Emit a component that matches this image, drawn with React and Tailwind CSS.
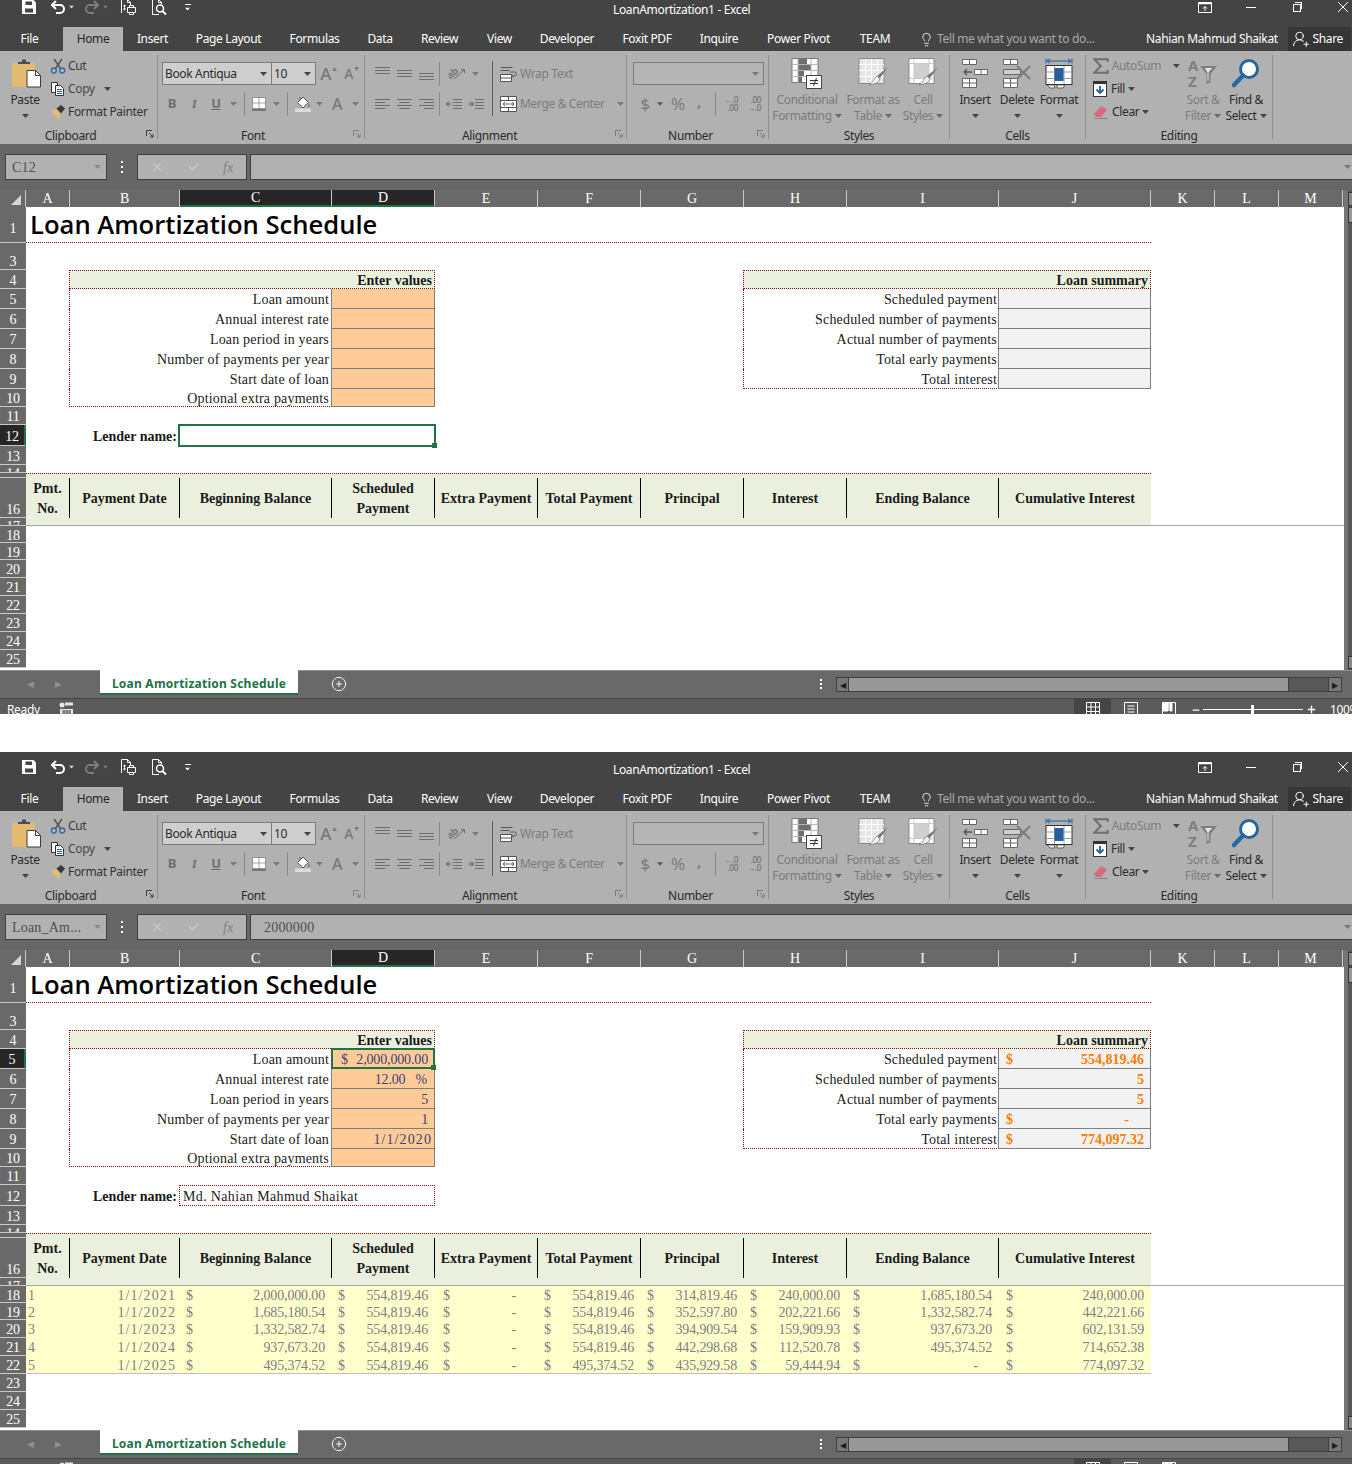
import React from "react";
import { Lightbulb, UserRoundPlus, CirclePlus, Check, Minus, Plus, X } from "lucide-react";

const COLS =
  "grid grid-cols-[26px_44px_110px_152px_103px_103px_103px_103px_103px_152px_152px_64px_64px_64px_1px]";
const INNER = "grid grid-cols-[44px_110px_152px_103px_103px_103px_103px_103px_152px_152px]";
const FONT_SERIF = "[font-family:'Liberation_Serif',serif]";
const DOT = "border-dotted border-[#8a0f0f]";
const OFF = "text-[#7c7c7c]";
const ON = "text-[#2b2b2b]";

const TABS = [
  ["File", "w-[59px] text-white"],
  ["Home", "w-[60px] ml-[4px] bg-[#b1b1b1] text-[#262626]"],
  ["Insert", "w-[59px] text-white"],
  ["Page Layout", "w-[93px] text-white"],
  ["Formulas", "w-[79px] text-white"],
  ["Data", "w-[52px] text-white"],
  ["Review", "w-[67px] text-white"],
  ["View", "w-[53px] text-white"],
  ["Developer", "w-[82px] text-white"],
  ["Foxit PDF", "w-[78px] text-white"],
  ["Inquire", "w-[66px] text-white"],
  ["Power Pivot", "w-[93px] text-white"],
  ["TEAM", "w-[60px] text-white"],
];

const LETTERS = [
  ["A", "col-start-2"],
  ["B", "col-start-3"],
  ["C", "col-start-4"],
  ["D", "col-start-5"],
  ["E", "col-start-6"],
  ["F", "col-start-7"],
  ["G", "col-start-8"],
  ["H", "col-start-9"],
  ["I", "col-start-10"],
  ["J", "col-start-11"],
  ["K", "col-start-12"],
  ["L", "col-start-13"],
  ["M", "col-start-14"],
];

const INPUT_LABELS = [
  "Loan amount",
  "Annual interest rate",
  "Loan period in years",
  "Number of payments per year",
  "Start date of loan",
  "Optional extra payments",
];
const SUMMARY_LABELS = [
  "Scheduled payment",
  "Scheduled number of payments",
  "Actual number of payments",
  "Total early payments",
  "Total interest",
];

const SCHEDULE = [
  ["1", "1/1/2021", "2,000,000.00", "554,819.46", "-", "554,819.46", "314,819.46", "240,000.00", "1,685,180.54", "240,000.00"],
  ["2", "1/1/2022", "1,685,180.54", "554,819.46", "-", "554,819.46", "352,597.80", "202,221.66", "1,332,582.74", "442,221.66"],
  ["3", "1/1/2023", "1,332,582.74", "554,819.46", "-", "554,819.46", "394,909.54", "159,909.93", "937,673.20", "602,131.59"],
  ["4", "1/1/2024", "937,673.20", "554,819.46", "-", "554,819.46", "442,298.68", "112,520.78", "495,374.52", "714,652.38"],
  ["5", "1/1/2025", "495,374.52", "554,819.46", "-", "495,374.52", "435,929.58", "59,444.94", "-", "774,097.32"],
];
const SCHEDULE_ROWS = [
  ["18", "h-[17px]"],
  ["19", "h-[17px]"],
  ["20", "h-[18px]"],
  ["21", "h-[18px]"],
  ["22", "h-[18px]"],
];

const Caret = ({ c = "#555", className = "" }) => (
  <svg width="7" height="4" viewBox="0 0 7 4" className={className}>
    <path d="M0 0h7L3.5 4z" fill={c} />
  </svg>
);

// quick access toolbar
const SaveIcon = () => (
  <svg width="16" height="16" viewBox="0 0 16 16">
    <path fillRule="evenodd" d="M1 1h11.5L15 3.5V15H1zM4.500 2.500V6h6.500V2.500zM4 9.500v4h8v-4z" fill="#fff" />
  </svg>
);
const UndoIcon = ({ c = "#fff", flip = false }) => (
  <svg width="16" height="14" viewBox="0 0 16 14" className={flip ? "-scale-x-100" : ""}>
    <path d="M6 1L2 5l4 4M2 5h8a3.600 3.600 0 0 1 0 8H6" fill="none" stroke={c} strokeWidth="2" />
  </svg>
);
const PrintIcon = () => (
  <svg width="17" height="18" viewBox="0 0 17 18" fill="none" stroke="#fff">
    <path d="M1.500 15V1.500h6l3 3V8" />
    <path d="M7.500 1.500v3h3" />
    <path d="M7.500 9.500h8v5h-8zM9.500 9.500V7.500h4v2M9.500 14.500v2h4v-2" />
    <path d="M3 8h3M3 11h3M4.500 6.500v6" strokeWidth="0.8" />
  </svg>
);
const PreviewIcon = () => (
  <svg width="17" height="18" viewBox="0 0 17 18" fill="none" stroke="#fff">
    <path d="M8 16.500H1.500v-15h6l3 3v2M7.500 1.500v3h3" />
    <circle cx="9" cy="10.500" r="3.500" strokeWidth="1.500" />
    <path d="M11.500 13l3.500 3.500" strokeWidth="2" />
  </svg>
);
const RibbonDisplayIcon = () => (
  <svg width="14" height="11" viewBox="0 0 14 11" fill="none" stroke="#fff">
    <path d="M.500.500h13v10h-13z" />
    <path d="M0 1.500h14" strokeWidth="1.500" />
    <path d="M7 9V4.500M5 6.500l2-2 2 2" />
  </svg>
);
const CloseIcon = () => (
  <svg width="10" height="10" viewBox="0 0 10 10" stroke="#fff">
    <path d="M0 0l10 10M10 0L0 10" />
  </svg>
);

// clipboard
const PasteIcon = () => (
  <svg width="30" height="32" viewBox="0 0 30 32">
    <rect x="0" y="5" width="23" height="24" rx="1.500" fill="#e3bb70" />
    <path d="M6 6V4h4V1.500h4V4h4v2z" fill="#4c4c4c" />
    <path d="M15 12.500h8.500l5 5V29H15z" fill="#fff" stroke="#3c3c3c" />
    <path d="M23.500 12.500v5h5" fill="none" stroke="#3c3c3c" />
  </svg>
);
const CutIcon = () => (
  <svg width="16" height="16" viewBox="0 0 16 16" fill="none">
    <path d="M4 1l6.500 9.500M12 1L5.500 10.500" stroke="#555" strokeWidth="1.500" />
    <circle cx="3.800" cy="12.500" r="2.500" stroke="#2b6cb0" strokeWidth="1.300" />
    <circle cx="12.200" cy="12.500" r="2.500" stroke="#2b6cb0" strokeWidth="1.300" />
  </svg>
);
const CopyIcon = () => (
  <svg width="16" height="16" viewBox="0 0 16 16" fill="#fff" stroke="#333">
    <path d="M1.500 1.500h6v10h-6z" />
    <path d="M5.500 4.500h5l3 3v7h-8z" />
    <path d="M7 8.500h5M7 10.500h5M7 12.500h5" stroke="#1f5f9e" />
  </svg>
);
const PainterIcon = () => (
  <svg width="16" height="15" viewBox="0 0 16 15">
    <path d="M1 7l5-2 5 5-3 5z" fill="#e3bb70" />
    <path d="M6.500 4.500L11 1l4 3.500-4 5z" fill="#3a3a3a" />
  </svg>
);

// font
const BordersIcon = () => (
  <svg width="14" height="14" viewBox="0 0 14 14">
    <rect x="0.500" y="0.500" width="13" height="11" fill="#fff" />
    <path d="M0.500 0.500h13v11h-13zM7 0.500v11M0.500 6h13" fill="none" stroke="#555" strokeDasharray="1 1" />
    <path d="M0 13h14" stroke="#666" strokeWidth="1.500" />
  </svg>
);
const FillIcon = () => (
  <svg width="16" height="16" viewBox="0 0 16 16">
    <path d="M8 1l5.500 5.500L8 12 2.500 6.500z" fill="#fff" stroke="#555" />
    <path d="M5 3.500V1" stroke="#555" />
    <path d="M14 8c1 1.500 1 3 0 3s-1-1.500 0-3z" fill="#666" />
    <rect x="0" y="12.500" width="16" height="3.500" fill="#dcdcdc" />
  </svg>
);

// alignment
const Lines = ({ d }) => (
  <svg width="15" height="15" viewBox="0 0 15 15">
    <path d={d} stroke="#6e6e6e" strokeWidth="1" fill="none" />
  </svg>
);
const OrientIcon = () => (
  <svg width="20" height="15" viewBox="0 0 20 15">
    <text x="1" y="11" fontSize="10" fontWeight="700" fill="#7a7a7a" transform="rotate(-38 6 8)" fontFamily="Noto Sans">
      ab
    </text>
    <path d="M8 13L18 4M15 3.500h3.500V7" stroke="#6e6e6e" fill="none" />
  </svg>
);
const IndentIcon = ({ out = false }) => (
  <svg width="16" height="13" viewBox="0 0 16 13" fill="none" stroke="#6e6e6e">
    <path d="M7 1.500h9M7 4.500h9M7 7.500h9M7 10.500h9" />
    <path d={out ? "M5.500 6H.5M3 3.500L.5 6 3 8.500" : "M.5 6h5M3 3.500L5.500 6 3 8.500"} stroke="#555" />
  </svg>
);
const WrapIcon = () => (
  <svg width="17" height="16" viewBox="0 0 17 16" fill="none" stroke="#555">
    <path d="M.500 1.500h12M.500 4.500h9" />
    <path d="M.500 8.500h11v7h-11zM.500 12h11" fill="#fff" />
    <path d="M10 6h4.500a1.800 1.800 0 0 1 0 4H12M13.500 8.500L12 10l1.500 1.500" stroke="#666" />
  </svg>
);
const MergeIcon = () => (
  <svg width="17" height="16" viewBox="0 0 17 16" fill="#fff" stroke="#555">
    <path d="M.500.500h16v15H.500z" />
    <path d="M.500 4.500h16M.500 11.500h16M8.500.500v4M8.500 11.500v4" />
    <path d="M3 8h11M5 6l-2 2 2 2M12 6l2 2-2 2" fill="none" strokeWidth="0.900" />
  </svg>
);

// styles
const CondIcon = () => (
  <svg width="32" height="32" viewBox="0 0 32 32">
    <rect x="1" y="0.500" width="26" height="24" fill="#fff" stroke="#777" />
    <path d="M7 1h9v5H7zM7 7h13v5H7zM7 13h6v5H7zM7 19h4v5H7z" fill="#6f6f6f" />
    <path d="M1 6.500h26M1 12.500h26M1 18.500h26M7 1v24M20 1v24" stroke="#b5b5b5" />
    <rect x="15.500" y="17.500" width="15" height="13" fill="#fff" stroke="#444" />
    <path d="M19 22.500h8M19 25.500h8M25.500 20l-3 8" stroke="#333" fill="none" />
  </svg>
);
const TableIcon = () => (
  <svg width="32" height="32" viewBox="0 0 32 32">
    <rect x="2" y="0.500" width="25" height="25" fill="#e6e6e6" stroke="#8a8a8a" />
    <path d="M2 6.500h25M2 12.500h25M2 18.500h25M8.500 1v24M14.500 1v24M20.500 1v24" stroke="#fff" />
    <path d="M31 9L23 20l-3-2z" fill="#767676" />
    <path d="M20 18l3 3c-1 3-4 5-11 6 4-2 5-7 8-9z" fill="#f3f3f3" stroke="#6f6f6f" strokeWidth="0.700" />
  </svg>
);
const CellStyleIcon = () => (
  <svg width="32" height="32" viewBox="0 0 32 32">
    <rect x="2" y="0.500" width="25" height="25" fill="#fff" stroke="#8a8a8a" />
    <rect x="7" y="5.500" width="15" height="15" fill="#cfcfcf" />
    <path d="M2 5.500h25M2 20.500h25M7 1v24M22 1v24" stroke="#c8c8c8" />
    <path d="M31 9L23 20l-3-2z" fill="#767676" />
    <path d="M20 18l3 3c-1 3-4 5-11 6 4-2 5-7 8-9z" fill="#f3f3f3" stroke="#6f6f6f" strokeWidth="0.700" />
  </svg>
);

// cells
const InsertIcon = () => (
  <svg width="28" height="30" viewBox="0 0 28 30" fill="#fff" stroke="#666">
    <path d="M1.500 1.500h14v5h-14zM8.500 1.500v5" />
    <path d="M13.500 11.500h13v5h-13zM20 11.500v5" />
    <path d="M1.500 20.500h14v9h-14zM1.500 25h14M8.500 20.500v9" />
    <path d="M11 14H3M6 11l-3 3 3 3" fill="none" stroke="#555" strokeWidth="1.300" />
  </svg>
);
const DeleteIcon = () => (
  <svg width="30" height="30" viewBox="0 0 30 30" fill="#fff" stroke="#666">
    <path d="M1.500 1.500h14v5h-14zM8.500 1.500v5" />
    <path d="M1.500 11.500h17v5h-17z" fill="#d0d0d0" />
    <path d="M1.500 20.500h14v9h-14zM1.500 25h14M8.500 20.500v9" />
    <path d="M15 8l13 13M28 8L15 21" stroke="#7a7a7a" strokeWidth="1.800" fill="none" />
  </svg>
);
const FormatIcon = () => (
  <svg width="28" height="32" viewBox="0 0 28 32" fill="none">
    <path d="M1 .500v5M27 .500v5M2 3h24M5 1L2 3l3 2M23 1l3 2-3 2" stroke="#1f5f9e" />
    <rect x="1" y="7.500" width="26" height="19" fill="#fff" stroke="#333" />
    <path d="M1 14h26M1 20.500h26M9.500 8v18M19 8v18" stroke="#999" />
    <rect x="9.500" y="10" width="9" height="13" fill="#265f9e" />
    <path d="M2 27h7l1 3H5zM12 27h8l-2 3h-6z" fill="#f3f3f3" stroke="#444" strokeWidth="0.800" />
  </svg>
);

// editing
const SigmaIcon = () => (
  <svg width="16" height="16" viewBox="0 0 16 16">
    <path d="M15 4V1.200H1.500L8 8l-6.500 6.800H15V12" fill="none" stroke="#6e6e6e" strokeWidth="2" />
  </svg>
);
const FillDownIcon = () => (
  <svg width="14" height="16" viewBox="0 0 14 16">
    <rect x="0.500" y="0.500" width="13" height="15" fill="#fff" stroke="#333" />
    <rect x="0" y="0" width="14" height="3" fill="#333" />
    <path d="M7 5v7M3.500 8.500L7 12l3.500-3.500" fill="none" stroke="#1f5f9e" strokeWidth="1.800" />
  </svg>
);
const EraserIcon = () => (
  <svg width="16" height="14" viewBox="0 0 16 14">
    <path d="M1 9l7-8 6 3.500-6 7.500H3z" fill="#d9697f" />
    <path d="M1 13.500h14" stroke="#888" />
  </svg>
);
const SortIcon = () => (
  <svg width="32" height="30" viewBox="0 0 32 30">
    <text x="1" y="13" fontSize="15" fontWeight="700" fill="#7f7f7f" fontFamily="Noto Sans">A</text>
    <text x="1" y="29" fontSize="15" fontWeight="700" fill="#7f7f7f" fontFamily="Noto Sans">Z</text>
    <path d="M13 8h17l-6.500 8v8l-4 2V16z" fill="#7f7f7f" />
    <path d="M18 10h7l-3.500 4.500v8l-1 .5v-8.500z" fill="#e6e6e6" />
  </svg>
);
const FindIcon = () => (
  <svg width="28" height="30" viewBox="0 0 28 30" fill="none">
    <circle cx="17" cy="11" r="8.500" fill="#fff" stroke="#25689f" strokeWidth="3" />
    <path d="M11 17.500L2 27" stroke="#25689f" strokeWidth="4.500" strokeLinecap="round" />
  </svg>
);
const Launcher = ({ c = "#555" }) => (
  <svg width="8" height="8" viewBox="0 0 8 8" fill="none" stroke={c}>
    <path d="M.500 6V.500H6" />
    <path d="M3 3l4 4M7 4v3H4" />
  </svg>
);

const Group = ({ w, label, launcher, children }) => (
  <div className={`${w} relative h-[84px] border-r border-[#8f8f8f] shrink-0`}>
    <div className="h-[73px] flex">{children}</div>
    <div className="h-[11px] text-center leading-[15px] text-[#2b2b2b]">{label}</div>
    {launcher && (
      <div className="absolute right-[3px] bottom-[1px]">
        <Launcher c={launcher} />
      </div>
    )}
  </div>
);

const BigBtn = ({ w, icon, l1, l2, caret, c = OFF, caretColor = "#6a6a6a" }) => (
  <div className={`${w} flex flex-col items-center shrink-0 pt-[3px] leading-[16px] ${c}`}>
    <div className="h-[32px] flex items-start">{icon}</div>
    <div className="mt-[2px] whitespace-nowrap">{l1}</div>
    <div className="flex items-center gap-[3px] whitespace-nowrap h-[16px]">
      {l2}
      {caret && <Caret c={caretColor} />}
    </div>
  </div>
);

const Slot = ({ w, children, className = "" }) => (
  <div className={`${w} flex items-center justify-center shrink-0 ${className}`}>{children}</div>
);
const VSep = ({ w }) => (
  <div className={`${w} h-[24px] flex justify-center shrink-0`}>
    <div className="w-px h-full bg-[#8a8a8a]" />
  </div>
);

const Ribbon = () => (
  <div className="h-[93px] bg-[#b1b1b1] flex pt-[4px] text-[12px]">
    <Group w="w-[158px]" label={<span className="pr-[16px]">Clipboard</span>} launcher="#3a3a3a">
      <div className={`w-[50px] flex flex-col items-center pt-[3px] leading-[16px] ${ON}`}>
        <div className="h-[32px] ml-[4px]">
          <PasteIcon />
        </div>
        <div className="mt-[2px]">Paste</div>
        <Caret c="#444" className="mt-[6px]" />
      </div>
      <div className="-mt-[1px]">
        <div className="h-[23px] flex items-center gap-[2px] text-[#3a3a3a]">
          <CutIcon />
          Cut
        </div>
        <div className="h-[23px] flex items-center gap-[2px] text-[#4a4a4a]">
          <CopyIcon />
          Copy
          <Caret c="#444" className="ml-[7px]" />
        </div>
        <div className="h-[23px] flex items-center gap-[2px] text-[#333] whitespace-nowrap">
          <PainterIcon />
          Format Painter
        </div>
      </div>
    </Group>

    <Group w="w-[207px]" label={<span className="pr-[16px]">Font</span>} launcher="#7a7a7a">
      <div className="pl-[3px] pt-[7px] w-full">
        <div className="flex h-[23px] items-center">
          <div className="ml-[1px] w-[110px] h-full border border-[#7c7c7c] bg-[#cecece] flex items-center pl-[2px] pr-[4px] justify-between text-[#2b2b2b]">
            Book Antiqua
            <Caret c="#444" />
          </div>
          <div className="w-[44px] h-full border border-l-0 border-[#7c7c7c] bg-[#cecece] flex items-center pl-[2px] pr-[4px] justify-between text-[#2b2b2b]">
            10
            <Caret c="#444" />
          </div>
          <Slot w="w-[24px] ml-[1px]">
            <span className="text-[17px] text-[#777] font-medium">A</span>
            <span className="text-[7px] text-[#777] -mt-[8px]">▲</span>
          </Slot>
          <Slot w="w-[22px]">
            <span className="text-[14px] text-[#777] font-medium">A</span>
            <span className="text-[7px] text-[#777] -mt-[8px]">▼</span>
          </Slot>
        </div>
        <div className="flex h-[24px] mt-[7px] items-center text-[#6f6f6f] text-[13px]">
          <Slot w="w-[22px]"><b>B</b></Slot>
          <Slot w="w-[22px]"><i className={`font-bold ${FONT_SERIF}`}>I</i></Slot>
          <Slot w="w-[22px]"><b className="underline">U</b></Slot>
          <Slot w="w-[12px]"><Caret c="#7a7a7a" /></Slot>
          <VSep w="w-[10px]" />
          <Slot w="w-[20px]"><BordersIcon /></Slot>
          <Slot w="w-[14px]"><Caret c="#7a7a7a" /></Slot>
          <VSep w="w-[8px]" />
          <Slot w="w-[24px]"><FillIcon /></Slot>
          <Slot w="w-[8px]"><Caret c="#7a7a7a" /></Slot>
          <Slot w="w-[28px]"><span className="text-[16px] font-medium text-[#777]">A</span></Slot>
          <Slot w="w-[8px]"><Caret c="#7a7a7a" /></Slot>
        </div>
      </div>
    </Group>

    <Group w="w-[262px]" label={<span className="pr-[12px]">Alignment</span>} launcher="#7a7a7a">
      <div className="pl-[6px] pt-[7px] w-[127px]">
        <div className="flex h-[23px] items-center">
          <Slot w="w-[22px]"><Lines d="M0 1.500h15M0 4.500h15M0 7.500h15" /></Slot>
          <Slot w="w-[22px]"><Lines d="M0 4.500h15M0 7.500h15M0 10.500h15" /></Slot>
          <Slot w="w-[22px]"><Lines d="M0 7.500h15M0 10.500h15M0 13.500h15" /></Slot>
          <VSep w="w-[4px]" />
          <Slot w="w-[30px]"><OrientIcon /></Slot>
          <Slot w="w-[8px]"><Caret c="#7a7a7a" /></Slot>
        </div>
        <div className="flex h-[24px] mt-[7px] items-center">
          <Slot w="w-[22px]"><Lines d="M0 2.500h15M0 5.500h10M0 8.500h15M0 11.500h10" /></Slot>
          <Slot w="w-[22px]"><Lines d="M0 2.500h15M2.500 5.500h10M0 8.500h15M2.500 11.500h10" /></Slot>
          <Slot w="w-[22px]"><Lines d="M0 2.500h15M5 5.500h10M0 8.500h15M5 11.500h10" /></Slot>
          <VSep w="w-[4px]" />
          <Slot w="w-[25px]"><IndentIcon out /></Slot>
          <Slot w="w-[20px]"><IndentIcon /></Slot>
        </div>
      </div>
      <div className="w-px h-[55px] mt-[6px] bg-[#5c5c5c]" />
      <div className={`pl-[7px] pt-[7px] ${OFF}`}>
        <div className="flex h-[23px] items-center gap-[3px] whitespace-nowrap">
          <WrapIcon />
          Wrap Text
        </div>
        <div className="flex h-[24px] mt-[7px] items-center gap-[3px] whitespace-nowrap">
          <MergeIcon />
          Merge &amp; Center
          <Caret c="#7a7a7a" className="ml-[9px]" />
        </div>
      </div>
    </Group>

    <Group w="w-[142px]" label={<span className="pr-[14px]">Number</span>} launcher="#7a7a7a">
      <div className="pl-[6px] pt-[7px]">
        <div className="w-[131px] h-[23px] border border-[#7c7c7c] bg-[#b5b5b5] flex items-center justify-end pr-[4px]">
          <Caret c="#7a7a7a" />
        </div>
        <div className={`flex h-[24px] mt-[7px] items-center ${OFF}`}>
          <Slot w="w-[24px]"><span className="text-[17px]">$</span></Slot>
          <Slot w="w-[6px]"><Caret c="#555" /></Slot>
          <Slot w="w-[30px]"><span className="text-[17px]">%</span></Slot>
          <Slot w="w-[12px]"><span className="text-[15px] font-bold -mt-[6px]">,</span></Slot>
          <div className="w-[17px] h-full flex shrink-0">
            <div className="ml-[10px] w-px h-full bg-[#8a8a8a]" />
          </div>
          <div className="w-[16px] text-[8px] leading-[8px] text-right shrink-0 text-[#6a6a6a]">
            ←.0<br />.00
          </div>
          <div className="w-[16px] ml-[7px] text-[8px] leading-[8px] text-right shrink-0 text-[#6a6a6a]">
            .00<br />→.0
          </div>
        </div>
      </div>
    </Group>

    <Group w="w-[181px]" label="Styles">
      <BigBtn w="w-[76px]" icon={<CondIcon />} l1="Conditional" l2="Formatting" caret />
      <BigBtn w="w-[56px]" icon={<TableIcon />} l1="Format as" l2="Table" caret />
      <BigBtn w="w-[44px]" icon={<CellStyleIcon />} l1="Cell" l2="Styles" caret />
    </Group>

    <Group w="w-[136px]" label="Cells">
      <BigBtn w="w-[50px]" icon={<InsertIcon />} l1="Insert" caret c={ON} caretColor="#444" />
      <BigBtn w="w-[34px]" icon={<DeleteIcon />} l1="Delete" caret c={ON} caretColor="#444" />
      <BigBtn w="w-[50px]" icon={<FormatIcon />} l1="Format" caret c={ON} caretColor="#444" />
    </Group>

    <Group w="w-[187px]" label="Editing">
      <div className="w-[94px] shrink-0 pl-[7px] -mt-[1px]">
        <div className={`h-[23px] flex items-center gap-[3px] ${OFF}`}>
          <SigmaIcon />
          AutoSum
          <Caret c="#444" className="ml-[9px]" />
        </div>
        <div className={`h-[23px] flex items-center gap-[4px] ${ON}`}>
          <FillDownIcon />
          Fill
          <Caret c="#444" className="-ml-[1px]" />
        </div>
        <div className={`h-[23px] flex items-center gap-[3px] ${ON}`}>
          <EraserIcon />
          Clear
          <Caret c="#444" />
        </div>
      </div>
      <BigBtn w="w-[46px]" icon={<SortIcon />} l1="Sort &" l2="Filter" caret />
      <BigBtn w="w-[40px]" icon={<FindIcon />} l1="Find &" l2="Select" caret c={ON} caretColor="#444" />
    </Group>
  </div>
);

const TitleBar = () => (
  <div className="h-[35px] bg-[#444444] flex items-start text-white text-[12px]">
    <div className="w-[613px] flex items-center h-[30px] pl-[21px] shrink-0">
      <SaveIcon />
      <div className="ml-[13px]"><UndoIcon /></div>
      <Caret c="#ddd" className="ml-[2px] scale-75" />
      <div className="ml-[9px]"><UndoIcon c="#7d7d7d" flip /></div>
      <Caret c="#7d7d7d" className="ml-[2px] scale-75" />
      <div className="ml-[11px]"><PrintIcon /></div>
      <div className="ml-[14px]"><PreviewIcon /></div>
      <div className="ml-[16px] flex flex-col items-center gap-[2px]">
        <div className="w-[6px] h-px bg-white" />
        <Caret c="#fff" className="scale-75" />
      </div>
    </div>
    <div className="pt-[9px] leading-[18px] whitespace-nowrap">LoanAmortization1 - Excel</div>
    <div className="ml-auto flex items-center h-[30px] pr-[4px]">
      <RibbonDisplayIcon />
      <div className="w-[10px] h-px bg-white ml-[34px]" />
      <div className="ml-[37px] w-[8px] h-[8px] mt-[2px] border border-white bg-[#444] relative">
        <div className="absolute -top-[3px] left-[1px] w-[7px] h-[7px] border-t border-r border-white" />
      </div>
      <div className="ml-[37px]"><CloseIcon /></div>
    </div>
  </div>
);

const TabRow = () => (
  <div className="h-[24px] bg-[#444444] flex items-stretch text-[12px] leading-[24px]">
    {TABS.map(([label, cls]) => (
      <div key={label} className={`${cls} text-center shrink-0`}>
        {label}
      </div>
    ))}
    <div className="w-[20px] flex items-center ml-[14px] -mr-[5px]">
      <Lightbulb size={15} strokeWidth={1.3} color="#fff" />
    </div>
    <div className="ml-[2px] pl-[1px] text-[#a9a9a9] whitespace-nowrap w-[210px]">Tell me what you want to do...</div>
    <div className="text-white whitespace-nowrap">Nahian Mahmud Shaikat</div>
    <div className="ml-[10px] w-[63px] bg-[#353535] flex items-center justify-center gap-[3px] pr-[4px] text-white">
      <UserRoundPlus size={18} strokeWidth={1.3} color="#fff" />
      Share
    </div>
  </div>
);

const FormulaBar = ({ name, value }) => (
  <div className="h-[46px] bg-[#666666] pt-[10px]">
    <div className={`h-[26px] flex ${FONT_SERIF} tracking-[0.2px] text-[14px] text-[#4f4f4f]`}>
      <div className="ml-[5px] w-[102px] bg-[#b1b1b1] border border-[#3f3f3f] flex items-center justify-between pl-[6px] pr-[5px]">
        {name}
        <Caret c="#8a8a8a" />
      </div>
      <div className="w-[30px] flex flex-col items-center justify-center gap-[3px]">
        <div className="w-[2px] h-[2px] bg-white" />
        <div className="w-[2px] h-[2px] bg-white" />
        <div className="w-[2px] h-[2px] bg-white" />
      </div>
      <div className="w-[110px] bg-[#b1b1b1] border border-[#3f3f3f] flex items-center pl-[12px]">
        <X size={14} strokeWidth={3} color="#c4c4c4" />
        <Check size={14} strokeWidth={3} color="#c4c4c4" className="ml-[23px]" />
        <i className="ml-[22px] text-[#808080]">fx</i>
      </div>
      <div className="ml-[3px] flex-1 bg-[#b1b1b1] border border-r-0 border-[#3f3f3f] flex items-center pl-[13px] pr-[1px]">
        {value}
        <Caret c="#777" className="ml-auto" />
      </div>
    </div>
  </div>
);

const ColHead = ({ active }) => (
  <div className={`${COLS} h-[17px] bg-[#696969] ${FONT_SERIF} text-[14px] text-white`}>
    <div className="flex items-end justify-end pr-[4px] pb-[2px] border-r border-[#c9c9c9]">
      <svg width="10" height="10" viewBox="0 0 10 10">
        <path d="M10 0v10H0z" fill="#d4d4d4" />
      </svg>
    </div>
    {LETTERS.map(([l, start]) => (
      <div
        key={l}
        className={`${start} flex items-center justify-center leading-none border-r border-[#c9c9c9] ${
          active.includes(l) ? "bg-[#262626] border-b-2 border-b-[#217346]" : ""
        }`}
      >
        {l}
      </div>
    ))}
  </div>
);

const Row = ({ n, h, on, align = "items-center pt-[3px] leading-[18px]", children }) => (
  <div className={`${COLS} ${h}`}>
    <div
      className={`flex justify-center overflow-hidden ${FONT_SERIF} text-[14px] text-white border-b border-[#c9c9c9] ${align} ${
        on ? "bg-[#262626] border-r-2 border-r-[#217346]" : "bg-[#696969]"
      }`}
    >
      {n}
    </div>
    {children}
  </div>
);

const Money = ({ v, w }) => (
  <div className={`${w} flex justify-between items-center`}>
    <span>$</span>
    <span className={v === "-" ? "pr-[14px]" : ""}>{v}</span>
  </div>
);

const HeadCell = ({ line = true, children }) => (
  <div className={`flex items-center justify-center text-center leading-[20px] font-bold tracking-normal ${line ? "border-r border-black" : ""}`}>
    <div className="translate-y-px">{children}</div>
  </div>
);

const Selection = () => (
  <div className="absolute -inset-[1px] border-2 border-[#217346] z-10">
    <div className="absolute -right-[3px] -bottom-[3px] w-[5px] h-[5px] bg-[#217346]" />
  </div>
);

const Sheet = ({ filled }) => {
  const inputs = filled
    ? [
        <div key="a" className="w-full flex justify-between pl-[9px] pr-[6px]"><span>$</span><span>2,000,000.00</span></div>,
        <div key="b" className="w-full flex justify-end pr-[7px] gap-[10px]"><span>12.00</span><span>%</span></div>,
        <div key="c" className="w-full text-right pr-[6px]">5</div>,
        <div key="d" className="w-full text-right pr-[6px]">1</div>,
        <div key="e" className="w-full text-right pr-[2px] tracking-[1.1px]">1/1/2020</div>,
        null,
      ]
    : [null, null, null, null, null, null];
  const summary = filled
    ? [
        ["$", "554,819.46"],
        ["", "5"],
        ["", "5"],
        ["$", "-"],
        ["$", "774,097.32"],
      ]
    : [[], [], [], [], []];
  const inputRows = ["h-[20px]", "h-[20px]", "h-[20px]", "h-[20px]", "h-[20px]", "h-[18px]"];

  return (
    <div className="flex h-[480px] bg-white overflow-hidden">
      <div className={`w-[1344px] shrink-0 ${FONT_SERIF} tracking-[-0.15px] text-[14px] leading-[14px] text-[#1a1a1a]`}>
        <ColHead active={filled ? ["D"] : ["C", "D"]} />

        <Row n="1" h="h-[36px]" align="items-end pb-[4px] leading-[18px]">
          <div className={`col-start-2 col-span-10 border-b ${DOT} pl-[4px] flex items-center [font-family:'Open_Sans',sans-serif] tracking-normal text-[25.6px] leading-none font-semibold text-black whitespace-nowrap`}>
            Loan Amortization Schedule
          </div>
        </Row>
        <Row h="h-px" />
        <Row n="3" h="h-[26px]" align="items-end leading-[14px]" />

        <Row n="4" h="h-[19px]">
          <div className={`col-start-3 col-span-3 -ml-px bg-[#ebf0de] border ${DOT} flex items-center justify-end pr-[2px] pt-[2px] font-bold tracking-normal`}>
            Enter values
          </div>
          <div className={`col-start-9 col-span-3 -ml-px bg-[#ebf0de] border ${DOT} flex items-center justify-end pr-[2px] pt-[2px] font-bold tracking-normal`}>
            Loan summary
          </div>
        </Row>

        {INPUT_LABELS.map((label, i) => (
          <Row key={label} n={String(i + 5)} h={inputRows[i]} on={filled && i === 0}>
            <div className={`col-start-3 col-span-2 -ml-px border-l ${DOT} ${i === 5 ? "border-b" : ""} flex items-center justify-end pr-[3px] pt-[2px] tracking-[0.18px]`}>
              {label}
            </div>
            <div className="col-start-5 -ml-px relative bg-[#ffcc99] border-x border-b border-[#7f7f7f] flex items-center pt-[2px] text-[#3f3f76]">
              {inputs[i]}
              {filled && i === 0 && <Selection />}
            </div>
            {i < 5 && (
              <>
                <div className={`col-start-9 col-span-2 -ml-px border-l ${DOT} ${i === 4 ? "border-b" : ""} flex items-center justify-end pr-[2px] pt-[2px] tracking-[0.18px]`}>
                  {SUMMARY_LABELS[i]}
                </div>
                <div className="col-start-11 -ml-px bg-[#f2f2f2] border-x border-b border-[#7f7f7f] flex items-center justify-between pl-[7px] pr-[6px] pt-[2px] font-bold tracking-normal text-[#fa7d00]">
                  <span>{summary[i][0]}</span>
                  <span className={summary[i][1] === "-" ? "pr-[15px]" : ""}>{summary[i][1]}</span>
                </div>
              </>
            )}
          </Row>
        ))}

        <Row n="11" h="h-[18px]" />
        <Row n="12" h="h-[21px]" on={!filled}>
          <div className="col-start-3 flex items-center justify-end pr-[3px] pt-[2px] font-bold tracking-normal">Lender name:</div>
          <div className={`col-start-4 col-span-2 -ml-px relative flex items-center pl-[3px] pt-[2px] tracking-[0.35px] ${filled ? `border ${DOT}` : ""}`}>
            {filled && "Md. Nahian Mahmud Shaikat"}
            {!filled && <Selection />}
          </div>
        </Row>
        <Row n="13" h="h-[19px]" />
        <Row n="14" h="h-[8px]" align="items-start leading-[18px]" />
        <Row h="h-[5px]">
          <div className={`col-start-2 col-span-10 bg-[#ebf0de] border-t ${DOT}`} />
        </Row>
        <Row n="16" h="h-[40px]" align="items-end leading-[14px]">
          <div className={`col-start-2 col-span-10 ${INNER} bg-[#ebf0de]`}>
            <HeadCell>Pmt.<br />No.</HeadCell>
            <HeadCell>Payment Date</HeadCell>
            <HeadCell>Beginning Balance</HeadCell>
            <HeadCell>Scheduled<br />Payment</HeadCell>
            <HeadCell>Extra Payment</HeadCell>
            <HeadCell>Total Payment</HeadCell>
            <HeadCell>Principal</HeadCell>
            <HeadCell>Interest</HeadCell>
            <HeadCell>Ending Balance</HeadCell>
            <HeadCell line={false}>Cumulative Interest</HeadCell>
          </div>
        </Row>
        <Row n="17" h="h-[8px]" align="items-start leading-[18px]">
          <div className="col-start-2 col-span-10 bg-[#ebf0de] border-b border-[#a6a6a6]" />
          <div className="col-start-12 col-span-4 border-b border-[#a6a6a6]" />
        </Row>

        {SCHEDULE_ROWS.map(([n, h], i) => {
          const r = SCHEDULE[i];
          return (
            <Row key={n} n={n} h={h}>
              {filled && (
                <div className={`col-start-2 col-span-10 ${INNER} pt-[2px] bg-[#ffffcc] text-[#808080] ${i === 4 ? "border-b border-[#bfbfbf]" : ""}`}>
                  <div className="pl-[2px] flex items-center">{r[0]}</div>
                  <div className="flex items-center justify-end pr-[4px] tracking-[1.1px]">{r[1]}</div>
                  <Money v={r[2]} w="pl-[6px] pr-[7px]" />
                  <Money v={r[3]} w="pl-[6px] pr-[7px]" />
                  <Money v={r[4]} w="pl-[8px] pr-[8px]" />
                  <Money v={r[5]} w="pl-[6px] pr-[7px]" />
                  <Money v={r[6]} w="pl-[6px] pr-[7px]" />
                  <Money v={r[7]} w="pl-[6px] pr-[7px]" />
                  <Money v={r[8]} w="pl-[6px] pr-[7px]" />
                  <Money v={r[9]} w="pl-[7px] pr-[7px]" />
                </div>
              )}
            </Row>
          );
        })}

        <Row n="23" h="h-[18px]" />
        <Row n="24" h="h-[18px]" />
        <Row n="25" h="h-[18px]" />
      </div>

      <div className="w-[4px] bg-[#767676]" />
      <div className="w-[4px] bg-[#585858] flex flex-col">
        <div className="mt-[2px] h-[14px] bg-[#8a8a8a] border border-r-0 border-[#333]" />
        <div className="mt-px h-[16px] bg-[#999999] border border-r-0 border-[#333]" />
        <div className="mt-auto mb-px h-[13px] bg-[#8a8a8a] border border-r-0 border-[#333]" />
      </div>
    </div>
  );
};

const SheetTabs = () => (
  <div className="h-[28px] bg-[#696969] border-t border-[#8f8f8f] flex items-start text-[12px]">
    <div className="w-[100px] h-[25px] flex items-center text-[#8e8e8e] text-[9px] pl-[27px] gap-[21px] shrink-0">
      <span>◀</span>
      <span>▶</span>
    </div>
    <div className="w-[198px] h-[25px] -mt-px bg-white border-b-2 border-[#217346] text-[#217346] font-bold tracking-[0.23px] leading-[27px] text-center shrink-0 whitespace-nowrap">
      Loan Amortization Schedule
    </div>
    <div className="ml-[33px] h-[25px] flex items-center">
      <CirclePlus size={16} strokeWidth={1.4} color="#fff" />
    </div>
    <div className="ml-[473px] h-[25px] flex flex-col items-center justify-center gap-[2px]">
      <div className="w-[2px] h-[2px] bg-white" />
      <div className="w-[2px] h-[2px] bg-white" />
      <div className="w-[2px] h-[2px] bg-white" />
    </div>
    <div className="ml-[14px] mt-[6px] w-[506px] h-[15px] flex border border-[#3f3f3f] bg-[#585858]">
      <div className="w-[12px] bg-[#777] border-r border-[#3f3f3f] flex items-center justify-center text-[#1d1d1d] text-[8px]">◀</div>
      <div className="w-[440px] bg-[#979797] border-r border-[#3f3f3f]" />
      <div className="ml-auto w-[13px] bg-[#777] border-l border-[#3f3f3f] flex items-center justify-center text-[#1d1d1d] text-[8px]">▶</div>
    </div>
  </div>
);

const StatusBar = () => (
  <div className="w-[1400px] h-[24px] bg-[#5b5b5b] border-t border-[#454545] flex items-start text-[12px] text-white whitespace-nowrap">
    <div className="w-[1074px] flex shrink-0">
      <div className="pl-[7px] pt-[2px] leading-[18px]">Ready</div>
      <div className="ml-[19px] mt-[3px]">
        <svg width="14" height="14" viewBox="0 0 14 14" fill="#e6e6e6">
          <circle cx="3" cy="3" r="2.500" />
          <path d="M6 .500h8v3H6zM1 7h13v7H1z" />
          <path d="M3 9h9M3 11h9M5 8v5M8 8v5M11 8v5" stroke="#5b5b5b" />
        </svg>
      </div>
    </div>
    <div className="w-[37px] h-[24px] bg-[#454545] flex justify-center pt-[3px]">
      <svg width="14" height="14" viewBox="0 0 14 14" fill="none" stroke="#fff">
        <path d="M.500.500h13v13h-13zM.500 5h13M.500 9.500h13M5 .500v13M9.500 .500v13" />
      </svg>
    </div>
    <div className="ml-[13px] mt-[3px]">
      <svg width="14" height="14" viewBox="0 0 14 14" fill="none" stroke="#fff">
        <path d="M.500.500h13v13h-13zM3.500 4h7M3.500 7h7M3.500 10h7" />
      </svg>
    </div>
    <div className="ml-[24px] mt-[3px]">
      <svg width="14" height="14" viewBox="0 0 14 14" fill="none" stroke="#fff">
        <path d="M.500.500h13v13h-13zM7 .500v8" />
        <path d="M1 1h5v8H1zM8 1h2v8H8z" fill="#fff" />
      </svg>
    </div>
    <div className="ml-[15px] mt-[5px] flex items-center">
      <Minus size={10} strokeWidth={3} color="#fff" />
      <div className="ml-[2px] w-[100px] h-px bg-white relative">
        <div className="absolute left-[48px] -top-[4px] w-[3px] h-[9px] bg-white" />
      </div>
      <Plus size={11} strokeWidth={3} color="#fff" className="ml-[3px]" />
    </div>
    <div className="ml-[13px] pt-[2px] leading-[18px]">100%</div>
  </div>
);

const ExcelWindow = ({ filled, name, value }) => (
  <>
    <TitleBar />
    <TabRow />
    <Ribbon />
    <FormulaBar name={name} value={value} />
    <Sheet filled={filled} />
    <SheetTabs />
    <StatusBar />
  </>
);

export default function App() {
  return (
    <div className="w-[1352px] h-[1464px] bg-white overflow-hidden [font-family:'Noto_Sans',sans-serif] tracking-[-0.35px]">
      <div className="h-[714px] overflow-hidden">
        <div className="-mt-[8px]">
          <ExcelWindow name="C12" value="" filled={false} />
        </div>
      </div>
      <div className="h-[38px]" />
      <div className="h-[712px] overflow-hidden">
        <ExcelWindow name="Loan_Am..." value="2000000" filled />
      </div>
    </div>
  );
}
